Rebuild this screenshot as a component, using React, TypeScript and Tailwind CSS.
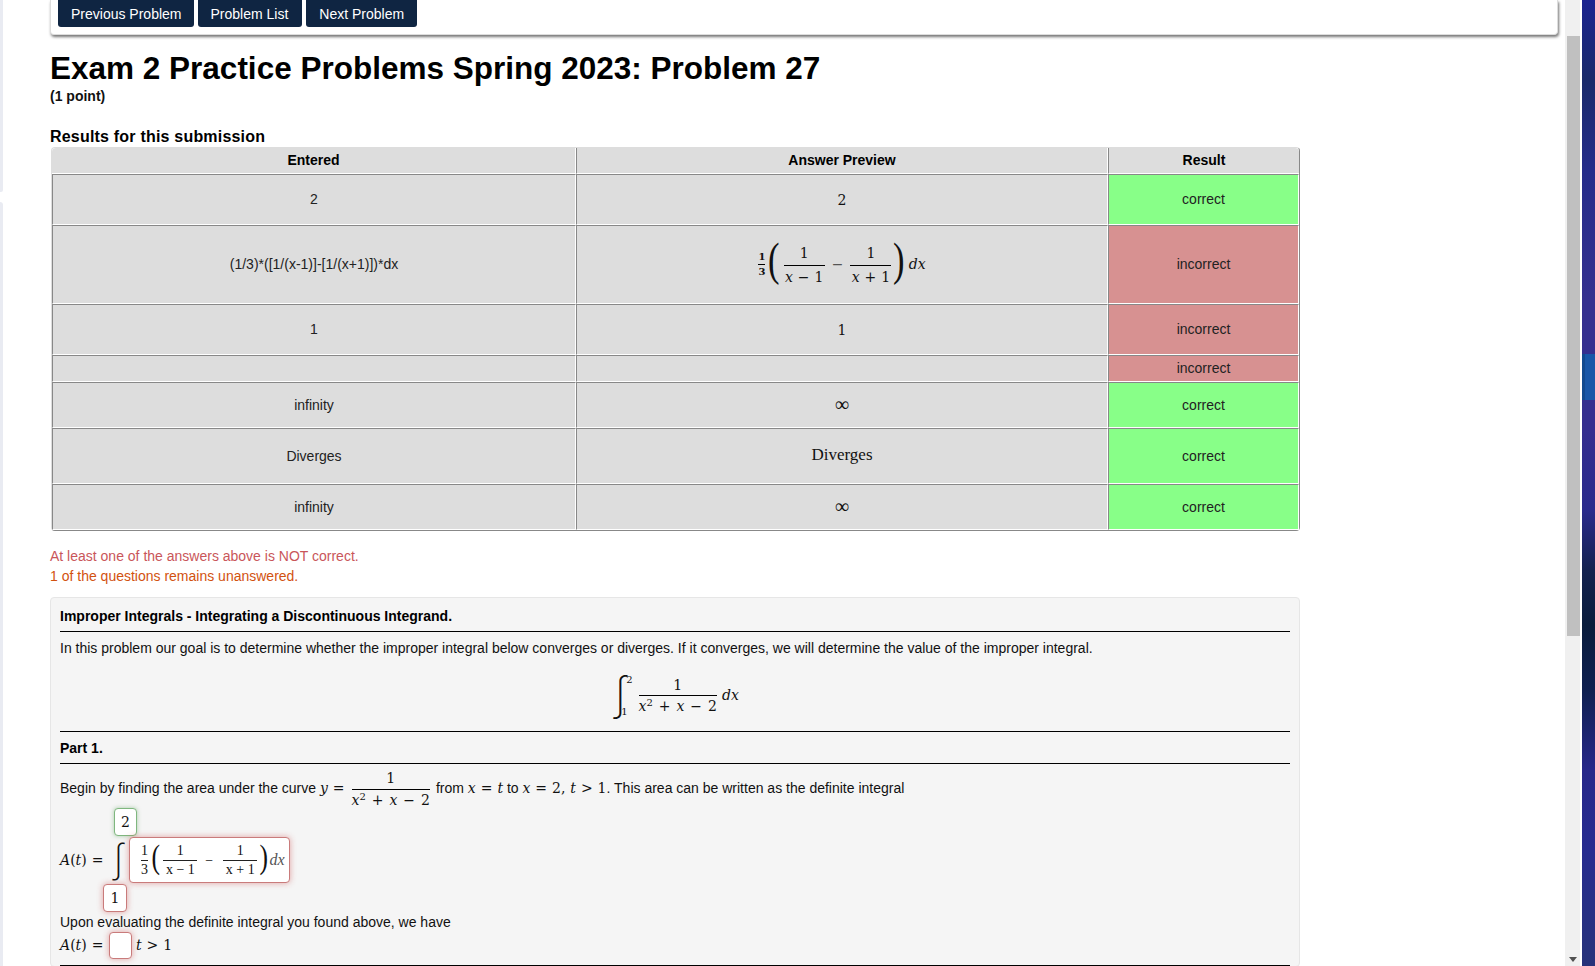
import React from 'react';

const cellBase = 'border-t border-l border-b border-r border-t-[#888] border-l-[#888] border-b-white border-r-white text-center align-middle p-0 font-normal text-[#222]';
const SERIF = 'font-["DejaVu_Serif",serif]';

const Frac = ({ top, bottom, className = '', barClass = 'bg-black', topPad = 'pb-[2px]', bottomPad = 'pt-[2px]' }: { top: React.ReactNode; bottom: React.ReactNode; className?: string; barClass?: string; topPad?: string; bottomPad?: string }) => (
  <span className={`inline-flex flex-col items-center ${className}`}>
    <span className={`leading-none ${topPad}`}>{top}</span>
    <span className={`h-px w-full ${barClass}`} />
    <span className={`leading-none whitespace-nowrap ${bottomPad}`}>{bottom}</span>
  </span>
);

const V = ({ children }: { children: React.ReactNode }) => <i>{children}</i>;

const Math = ({ children, className = '' }: { children: React.ReactNode; className?: string }) => (
  <span className={`${SERIF} text-[14px] text-[#111] whitespace-nowrap [word-spacing:0.5px] ${className}`}>{children}</span>
);

const Denominator = () => (
  <span className="[word-spacing:1.5px]">
    <V>x</V>
    <sup className="text-[10px] leading-none">2</sup> + <V>x</V> − 2
  </span>
);

const Paren = ({ children, className = '' }: { children: React.ReactNode; className?: string }) => (
  <span className={`font-["Liberation_Serif",serif] font-normal leading-none scale-x-75 ${className}`}>{children}</span>
);

const Integral = ({ className = '' }: { className?: string }) => (
  <span className={`font-["Inter",sans-serif] font-extralight leading-none text-[#111] ${className}`}>∫</span>
);

const PreviewExpression = () => (
  <Math className="inline-flex items-center text-[14px]">
    <Frac className="text-[10px] font-bold" top="1" bottom="3" />
    <Paren className="text-[46px] -mt-[10px] ml-[1px]">(</Paren>
    <Frac className="w-[41px] ml-[2px]" top="1" bottom={<span><V>x</V> − 1</span>} topPad="pb-[5px]" bottomPad="pt-[4px]" />
    <span className="mx-[7px] text-[#555]">−</span>
    <Frac className="w-[41px]" top="1" bottom={<span><V>x</V> + 1</span>} topPad="pb-[5px]" bottomPad="pt-[4px]" />
    <Paren className="text-[46px] -mt-[10px]">)</Paren>
    <span className="ml-[2px]"><V>dx</V></span>
  </Math>
);

const rows = [
  { h: 'h-[51px]', entered: '2', preview: <Math className="inline-block mt-px">2</Math>, ok: true },
  { h: 'h-[79px]', entered: '(1/3)*([1/(x-1)]-[1/(x+1)])*dx', preview: <PreviewExpression />, ok: false },
  { h: 'h-[51px]', entered: '1', preview: <Math className="inline-block mt-px">1</Math>, ok: false },
  { h: 'h-[27px]', entered: '', preview: null, ok: false },
  { h: 'h-[46px]', entered: 'infinity', preview: <Math className='text-[20px] font-["Liberation_Serif",serif] -mt-[2px] inline-block'>∞</Math>, ok: true },
  { h: 'h-[56px]', entered: 'Diverges', preview: <Math className='text-[17px] font-["Liberation_Serif",serif] -mt-[3px] inline-block'>Diverges</Math>, ok: true },
  { h: 'h-[46px]', entered: 'infinity', preview: <Math className='text-[20px] font-["Liberation_Serif",serif] -mt-[2px] inline-block'>∞</Math>, ok: true },
];

const ResultsTable = () => (
  <table className="ml-px table-fixed border-separate border-spacing-0 w-[1249px] border border-t-[#ddd] border-l-[#ddd] border-r-[#888] border-b-[#888] rounded-[4px]">
    <thead>
      <tr className="h-[26px]">
        <th className="w-[524px] bg-[#ddd] border-b border-r border-white font-bold text-[14px] text-black rounded-tl-[4px]">Entered</th>
        <th className="w-[532px] bg-[#ddd] border-b border-r border-l border-b-white border-r-white border-l-[#888] font-bold text-[14px] text-black">Answer Preview</th>
        <th className="bg-[#ddd] border-b border-l border-b-white border-l-[#888] font-bold text-[14px] text-black rounded-tr-[4px]">Result</th>
      </tr>
    </thead>
    <tbody>
      {rows.map((r, i) => (
        <tr key={i} className={r.h}>
          <td className={`${cellBase} bg-[#ddd]`}>{r.entered}</td>
          <td className={`${cellBase} bg-[#ddd]`}>{r.preview}</td>
          <td className={`${cellBase} ${r.ok ? 'bg-[#88ff88]' : 'bg-[#d79191]'}`}>{r.ok ? 'correct' : 'incorrect'}</td>
        </tr>
      ))}
    </tbody>
  </table>
);

const AnswerBox = ({ className = '', children }: { className?: string; children?: React.ReactNode }) => (
  <span className={`inline-flex items-center justify-center bg-white rounded-[4px] border ${className}`}>{children}</span>
);

const redBox = 'border-[#c97b7b] shadow-[0_0_6px_rgba(200,60,60,0.45)]';

const ProblemBox = () => (
  <div className="mt-[11px] w-[1250px] bg-[#f5f5f5] border border-[#e6e6e6] rounded-[4px] px-[9px] pt-[8px] text-[#111]">
    <div className="font-bold leading-5 text-black">Improper Integrals - Integrating a Discontinuous Integrand.</div>
    <div className="mt-[5px] h-px bg-black" />
    <p className="mt-[6px] leading-5">In this problem our goal is to determine whether the improper integral below converges or diverges. If it converges, we will determine the value of the improper integral.</p>
    <div className="h-[73px] flex items-center justify-center pt-[2px] pr-[12px]">
      <Math className="inline-flex items-center">
        <Integral className="text-[44px] w-[24px] text-center -mt-[6px] ml-[10px]" />
        <span className="inline-flex flex-col justify-between h-[42px] text-[10px] leading-none mr-[6px] -ml-[12px]">
          <span className="ml-[5px]">2</span>
          <span>1</span>
        </span>
        <Frac top="1" bottom={<Denominator />} topPad="pb-[3px]" bottomPad="pt-[3px]" />
        <span className="ml-[5px]"><V>dx</V></span>
      </Math>
    </div>
    <div className="h-px bg-black" />
    <div className="mt-[6px] font-bold leading-5 text-black">Part 1.</div>
    <div className="mt-[5px] h-px bg-black" />
    <div className="mt-[4px] h-[40px] flex items-center whitespace-pre">
      <span>Begin by finding the area under the curve </span>
      <Math><V>y</V> =</Math>
      <Frac className={`${SERIF} ml-[7px] mr-[6px] mt-[1px]`} top="1" bottom={<Denominator />} topPad="pb-[4px]" bottomPad="pt-[3px]" />
      <span>from </span>
      <Math><V>x</V> = <V>t</V></Math>
      <span> to </span>
      <Math><V>x</V> = 2, <V>t</V> &gt; 1</Math>
      <span>. This area can be written as the definite integral</span>
    </div>
    <div className="h-[28px] flex">
      <AnswerBox className={`ml-[54px] w-[23px] h-[28px] border-[#7fb77f] shadow-[0_0_4px_rgba(90,160,90,0.5)] ${SERIF} text-[14px]`}>2</AnswerBox>
    </div>
    <div className="mt-px h-[46px] flex items-center">
      <Math className="w-[49px]"><V>A</V>(<V>t</V>) =</Math>
      <Integral className="text-[38px] w-[20px] text-center -mt-[4px]" />
      <AnswerBox className={`w-[161px] h-[46px] ${redBox} font-["Liberation_Serif",serif] text-[14px] justify-start pl-[11px]`}>
        <Frac top="1" bottom="3" className="text-[14px]" barClass="bg-[#222]" />
        <Paren className="text-[34px] ml-[2px] -mt-[6px]">(</Paren>
        <Frac top="1" bottom="x − 1" className="w-[34px] ml-[2px] text-[14px]" barClass="bg-[#222]" />
        <span className="ml-[8px] mr-[10px]">−</span>
        <Frac top="1" bottom="x + 1" className="w-[34px] text-[14px]" barClass="bg-[#222]" />
        <Paren className="text-[34px] ml-[1px] -mt-[6px]">)</Paren>
        <i className="text-[#555] text-[16px]">dx</i>
      </AnswerBox>
    </div>
    <div className="mt-px h-[28px] flex">
      <AnswerBox className={`ml-[43px] w-[24px] h-[28px] ${redBox} ${SERIF} text-[14px]`}>1</AnswerBox>
    </div>
    <div className="leading-5">Upon evaluating the definite integral you found above, we have</div>
    <div className="h-[27px] flex items-center">
      <Math className="w-[49px]"><V>A</V>(<V>t</V>) =</Math>
      <AnswerBox className={`w-[23px] h-[27px] ${redBox}`} />
      <Math className="ml-[4px]"><V>t</V> &gt; 1</Math>
    </div>
    <div className="mt-[6px] h-px bg-black" />
  </div>
);

export default function App() {
  return (
    <div className='flex h-screen w-full overflow-hidden bg-white text-[14px] font-["Liberation_Sans",Arial,sans-serif]'>
      <div className="w-[3px] shrink-0 flex flex-col">
        <div className="h-[192px] bg-[#e9ebf2] rounded-br-[2px]" />
        <div className="mt-[10px] flex-1 bg-[#e9ebf2] rounded-tr-[3px]" />
      </div>

      <main className="flex-1 min-w-0 overflow-hidden pl-[47px] pr-[7px]">
        <div className="h-[35px] bg-white rounded-b-[4px] border border-t-0 border-[#ddd] shadow-[1px_2px_3px_rgba(0,0,0,0.55)] pl-[7px] flex items-start gap-1">
          <button className="h-[27px] pl-[13px] pr-[12px] bg-[#0f2542] text-white rounded-b-[3px] leading-[24px]">Previous Problem</button>
          <button className="h-[27px] pl-[13px] pr-[14px] bg-[#0f2542] text-white rounded-b-[3px] leading-[24px]">Problem List</button>
          <button className="h-[27px] px-[13px] bg-[#0f2542] text-white rounded-b-[3px] leading-[24px]">Next Problem</button>
        </div>

        <h1 className="mt-[15px] text-[31.5px] leading-9 font-bold text-black">Exam 2 Practice Problems Spring 2023: Problem 27</h1>
        <div className="leading-5 font-bold text-[#111]">(1 point)</div>
        <h3 className="mt-[21px] text-[16px] leading-5 font-bold tracking-[0.2px] text-black">Results for this submission</h3>
        <ResultsTable />

        <div className="mt-[15px] leading-5 text-[#c9565a]">At least one of the answers above is NOT correct.</div>
        <div className="leading-5 text-[#d2520f]">1 of the questions remains unanswered.</div>

        <ProblemBox />
      </main>

      <div className="w-[15px] shrink-0 bg-[#f0f0f0] flex flex-col pl-[2px] pt-[36px]">
        <div className="h-[600px] bg-[#c0c0c0]" />
        <svg className="mt-auto mb-[4px] self-center -ml-[2px]" width="8" height="5" viewBox="0 0 8 5"><path d="M0 0h8L4 5z" fill="#505050" /></svg>
      </div>

      <div className="ml-[2px] w-[13px] shrink-0 pt-[354px] bg-[linear-gradient(180deg,#1c2490_0,#1a2a6a_80px,#252c8a_170px,#35308f_300px,#352e8f_430px,#2a2a8c_510px,#14224f_570px,#0a1c3c_625px,#0f2050_690px,#28288a_770px,#272c90_850px,#27337a_966px)]">
        <div className="h-[46px] bg-[#1957a8] border-l-[3px] border-l-[#124a90]" />
      </div>
    </div>
  );
}
